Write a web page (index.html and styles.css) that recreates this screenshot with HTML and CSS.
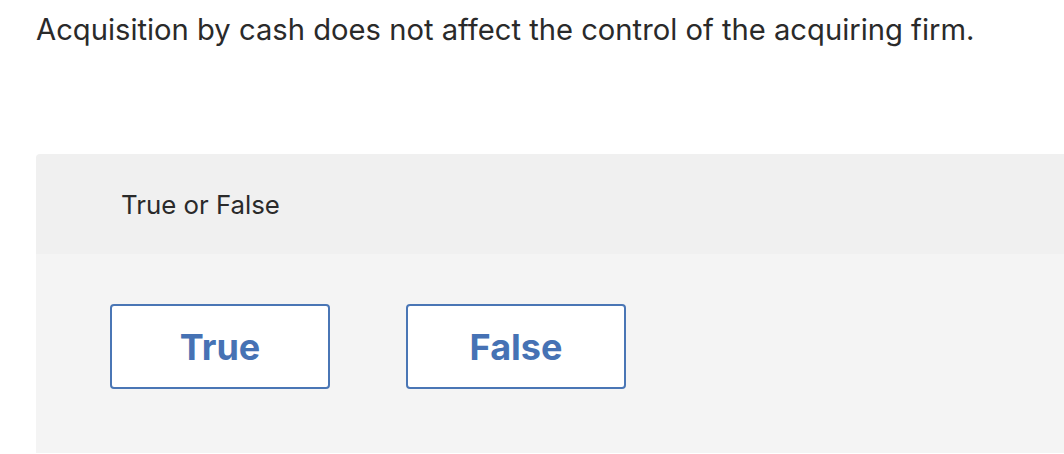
FILE: index.html
```html
<!DOCTYPE html>
<html>
<head>
<meta charset="utf-8">
<link rel="stylesheet" href="styles.css">
</head>
<body>
<div class="page">
  <p class="question">Acquisition by cash does not affect the control of the acquiring firm.</p>
  <div class="panel">
    <div class="panel-head">True or False</div>
    <div class="panel-body">
      <button class="choice">True</button>
      <button class="choice">False</button>
    </div>
  </div>
</div>
</body>
</html>
```
FILE: styles.css
```css
html, body {
  margin: 0;
  padding: 0;
  background: #fff;
}
.page {
  padding: 12px 0 0 36px;
  font-family: Inter, Lato, sans-serif;
  color: #2a2a2a;
}
.question {
  margin: 0;
  font-size: 29.2px;
  line-height: 36px;
}
.panel {
  margin-top: 106px;
  border-radius: 4px 0 0 0;
  overflow: hidden;
}
.panel-head {
  background: #f0f0f0;
  height: 100px;
  display: flex;
  align-items: center;
  padding-left: 85px;
  font-size: 25.8px;
}
.panel-body {
  background: #f4f4f4;
  height: 199px;
  display: flex;
  gap: 76px;
  padding: 50px 0 0 74px;
  box-sizing: border-box;
}
.choice {
  width: 220px;
  height: 85px;
  box-sizing: border-box;
  border: 2px solid #4a76b5;
  border-radius: 4px;
  background: #fff;
  color: #4672b4;
  font-family: Inter, Lato, sans-serif;
  font-weight: 700;
  font-size: 36px;
}
```
